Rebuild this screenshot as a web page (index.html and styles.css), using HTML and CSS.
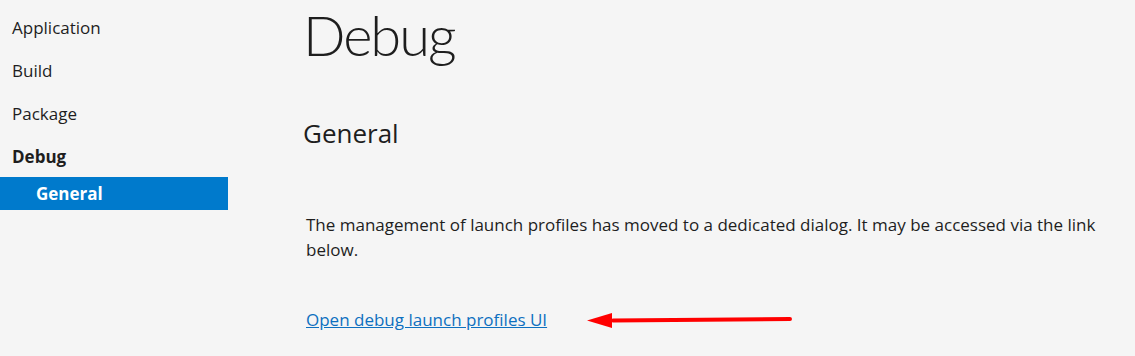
FILE: index.html
```html
<!DOCTYPE html>
<html>
<head>
<meta charset="utf-8">
<link rel="stylesheet" href="styles.css">
</head>
<body>
<div class="page">
  <nav class="sidebar">
    <div class="nav-item">Application</div>
    <div class="nav-item">Build</div>
    <div class="nav-item">Package</div>
    <div class="nav-item nav-group">Debug</div>
    <div class="nav-item nav-sub selected">General</div>
  </nav>
  <main class="content">
    <h1 class="title">Debug</h1>
    <h2 class="section">General</h2>
    <p class="text">The management of launch profiles has moved to a dedicated dialog. It may be accessed via the link below.</p>
    <div class="link-row">
      <a class="link" href="#">Open debug launch profiles UI</a>
      <svg class="arrow" width="210" height="20" viewBox="0 0 210 20">
        <path d="M26 10.5 L203 9" stroke="#ff0000" stroke-width="4" stroke-linecap="round" fill="none"/>
        <polygon points="0,10.5 25,3 25,18" fill="#ff0000"/>
      </svg>
    </div>
  </main>
</div>
</body>
</html>
```
FILE: styles.css
```css
html, body {
  margin: 0;
  padding: 0;
  background: #f5f5f5;
}
body {
  font-family: "Open Sans", "Noto Sans", sans-serif;
  color: #1e1e1e;
  width: 1135px;
  height: 356px;
  overflow: hidden;
}
.page {
  display: flex;
}
.sidebar {
  width: 228px;
  flex: none;
  padding-top: 11px;
}
.nav-item {
  height: 43px;
  line-height: 34px;
  padding-left: 12px;
  font-size: 17px;
}
.nav-group {
  font-weight: 700;
}
.nav-sub {
  padding-left: 36px;
  font-weight: 700;
  height: 33px;
  line-height: 33px;
  margin-top: -6px;
}
.selected {
  background: #007acc;
  color: #ffffff;
}
.content {
  padding-left: 75px;
  flex: 1;
  padding-right: 20px;
}
.title {
  margin: 0;
  font-family: "Lato", "Open Sans", sans-serif;
  font-size: 56px;
  font-weight: 300;
  letter-spacing: -2px;
  line-height: 70px;
}
.section {
  margin: 48px 0 0 0;
  font-size: 26px;
  font-weight: 400;
  line-height: 30px;
}
.text {
  margin: 64px 0 0 3px;
  font-size: 17px;
  line-height: 25px;
  max-width: 810px;
}
.link-row {
  position: relative;
  margin: 45px 0 0 3px;
  height: 25px;
  line-height: 25px;
}
.link {
  color: #0e70c0;
  font-size: 17px;
  text-decoration: underline;
}
.arrow {
  position: absolute;
  left: 281px;
  top: 3px;
}
```
